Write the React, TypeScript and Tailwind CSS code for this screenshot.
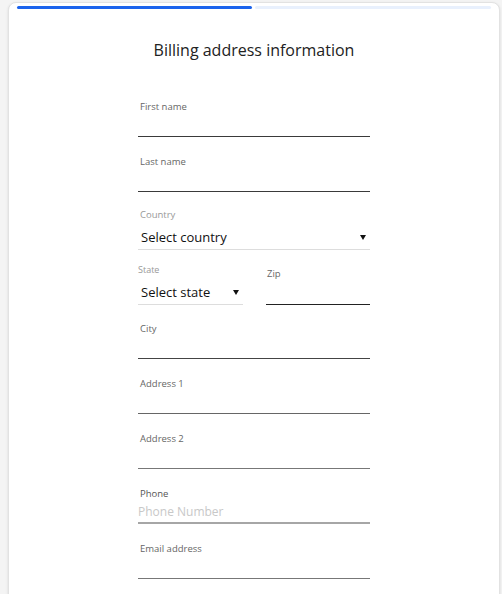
const font = { fontFamily: '"Open Sans", "Noto Sans", sans-serif' };

function TextField({ label, placeholder, gap = 'pt-[18px]', line = 'border-[#3a3a3a]' }: { label: string; placeholder?: string; gap?: string; line?: string }) {
  return (
    <div className={gap}>
      <div className="pl-[2px] text-[9.5px] leading-[14px] text-[#666]">{label}</div>
      <div className={`h-[23px] border-b ${line} flex items-end pb-[2px]`}>
        {placeholder && <span className="text-[12px] leading-[16px] text-[#c4c4c4]">{placeholder}</span>}
      </div>
    </div>
  );
}

function Caret() {
  return (
    <svg width="6" height="5" viewBox="0 0 6 5" className="mr-[4px]">
      <path d="M0 0H6L3 5Z" fill="#111" />
    </svg>
  );
}

export default function App() {
  return (
    <div className="min-h-[594px] bg-[#f4f4f4] pl-[8px] pr-[2px] pt-[2px]" style={font}>
      <div className="min-h-[600px] rounded-t-[8px] border border-[#e2e2e2] bg-white px-[8px] pt-[3px] shadow-sm">
        <div className="flex gap-[3px]">
          <div className="h-[3px] w-[235px] rounded-full bg-[#1b63ec]" />
          <div className="h-[3px] flex-1 rounded-full bg-[#e8f0fd]" />
        </div>

        <h1 className="mt-[29px] text-center text-[16px] leading-[24px] text-[#222]">Billing address information</h1>

        <div className="mx-auto w-[232px] pt-[38px]">
          <TextField label="First name" gap="pt-0" />
          <TextField label="Last name" />

          <div className="pt-[16px]">
            <div className="pl-[2px] text-[9.5px] leading-[14px] text-[#999]">Country</div>
            <div className="flex h-[28px] items-center justify-between border-b border-[#ddd] pl-[3px] pt-[4px]">
              <span className="text-[13px] text-[#111]">Select country</span>
              <Caret />
            </div>
          </div>

          <div className="flex gap-[23px] pt-[13px]">
            <div className="w-[105px]">
              <div className="text-[9px] leading-[14px] text-[#999]">State</div>
              <div className="flex h-[28px] items-center justify-between border-b border-[#ddd] pl-[3px] pt-[4px]">
                <span className="text-[13px] text-[#111]">Select state</span>
                <Caret />
              </div>
            </div>
            <div className="flex-1 pt-[4px]">
              <div className="pl-[1px] text-[9.5px] leading-[14px] text-[#666]">Zip</div>
              <div className="h-[24px] border-b border-[#222]" />
            </div>
          </div>

          <TextField label="City" gap="pt-[17px]" line="border-[#444]" />
          <TextField label="Address 1" line="border-[#666]" />
          <TextField label="Address 2" line="border-[#777]" />
          <div className="pt-[18px]">
            <div className="pl-[2px] text-[9.5px] leading-[14px] text-[#555]">Phone</div>
            <div className="flex h-[23px] items-center border-b-2 border-[#a6a6a6]">
              <span className="text-[12px] text-[#c8c8c8]">Phone Number</span>
            </div>
          </div>
          <TextField label="Email address" gap="pt-[18px]" line="border-[#777]" />
        </div>
      </div>
    </div>
  );
}
